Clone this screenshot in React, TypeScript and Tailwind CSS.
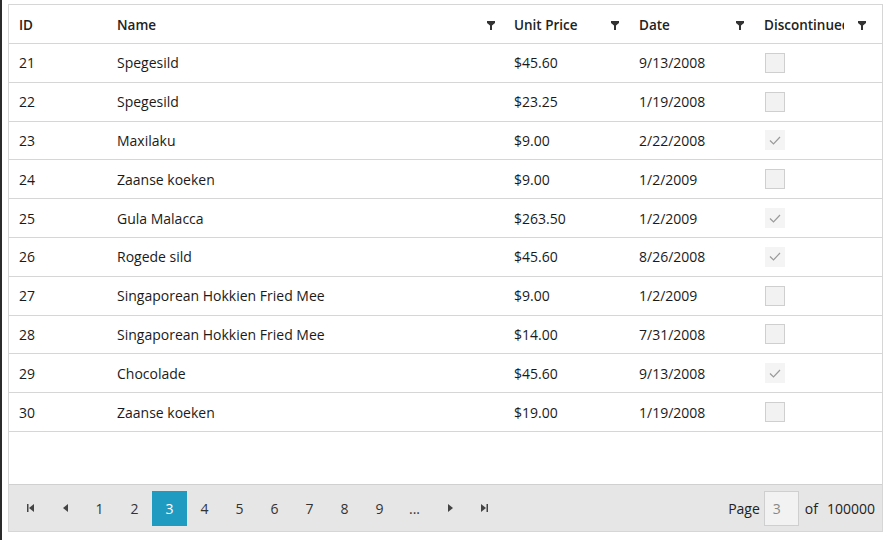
import React from 'react';

const rows = [
  { id: 21, name: 'Spegesild', price: '$45.60', date: '9/13/2008', disc: false },
  { id: 22, name: 'Spegesild', price: '$23.25', date: '1/19/2008', disc: false },
  { id: 23, name: 'Maxilaku', price: '$9.00', date: '2/22/2008', disc: true },
  { id: 24, name: 'Zaanse koeken', price: '$9.00', date: '1/2/2009', disc: false },
  { id: 25, name: 'Gula Malacca', price: '$263.50', date: '1/2/2009', disc: true },
  { id: 26, name: 'Rogede sild', price: '$45.60', date: '8/26/2008', disc: true },
  { id: 27, name: 'Singaporean Hokkien Fried Mee', price: '$9.00', date: '1/2/2009', disc: false },
  { id: 28, name: 'Singaporean Hokkien Fried Mee', price: '$14.00', date: '7/31/2008', disc: false },
  { id: 29, name: 'Chocolade', price: '$45.60', date: '9/13/2008', disc: true },
  { id: 30, name: 'Zaanse koeken', price: '$19.00', date: '1/19/2008', disc: false },
];

function Funnel() {
  return (
    <svg width="8" height="9" viewBox="0 0 8 9" className="shrink-0">
      <path d="M0 0h8v2L5 4.5V9H3V4.5L0 2z" fill="#333" />
    </svg>
  );
}

function Check({ on }: { on: boolean }) {
  if (on) {
    return (
      <div className="w-[20px] h-[20px] bg-[#f4f4f4] flex items-center justify-center">
        <svg width="12" height="9" viewBox="0 0 12 9">
          <path d="M1 4.5l3.5 3.5L11 1" stroke="#9a9a9a" strokeWidth="1.2" fill="none" />
        </svg>
      </div>
    );
  }
  return <div className="w-[20px] h-[20px] bg-[#f2f2f2] border border-[#cfcfcf]" />;
}

function PagerIcon({ kind }: { kind: 'first' | 'prev' | 'next' | 'last' }) {
  const d = {
    first: 'M1 0h1.5v8H1zM8 0v8L3 4z',
    prev: 'M7 0v8L2 4z',
    next: 'M2 0v8l5-4z',
    last: 'M0 0v8l5-4zM5.5 0H7v8H5.5z',
  }[kind];
  return (
    <svg width="8" height="8" viewBox="0 0 8 8">
      <path d={d} fill="#444" />
    </svg>
  );
}

const cols = 'grid grid-cols-[98px_397px_125px_125px_1fr]';

export default function App() {
  return (
    <div className="w-[894px] h-[540px] bg-white flex text-[14px] text-[#1a1a1a]" style={{ fontFamily: '"Open Sans", "Noto Sans", sans-serif' }}>
      <div className="w-[2px] bg-[#2b2b2b] shrink-0" />
      <div className="ml-[6px] mt-[4px] w-[875px] h-[528px] border border-[#d6d6d6] flex flex-col">
        <div className={`${cols} h-[39px] pt-[3px] border-b border-[#d6d6d6] font-semibold text-[13.5px] text-[#222]`}>
          <div className="flex items-center pl-[10px]">ID</div>
          <div className="flex items-center pl-[10px] pr-[9px] justify-between">
            <span>Name</span>
            <Funnel />
          </div>
          <div className="flex items-center pl-[10px] pr-[10px] justify-between">
            <span>Unit Price</span>
            <Funnel />
          </div>
          <div className="flex items-center pl-[10px] pr-[10px] justify-between">
            <span>Date</span>
            <Funnel />
          </div>
          <div className="flex items-center pl-[10px] pr-[14px] gap-[14px]">
            <span className="overflow-hidden whitespace-nowrap w-[80px]">Discontinued</span>
            <Funnel />
          </div>
        </div>
        {rows.map((r) => (
          <div key={r.id} className={`${cols} h-[38.8px] border-b border-[#d6d6d6]`}>
            <div className="flex items-center pl-[10px]">{r.id}</div>
            <div className="flex items-center pl-[10px]">{r.name}</div>
            <div className="flex items-center pl-[10px]">{r.price}</div>
            <div className="flex items-center pl-[10px]">{r.date}</div>
            <div className="flex items-center pl-[11px]">
              <Check on={r.disc} />
            </div>
          </div>
        ))}
        <div className="flex-1" />
        <div className="h-[47px] bg-[#e6e6e6] border-t border-[#d0d0d0] flex items-center pl-[3px] pr-[7px]">
          <div className="flex items-center">
            {(['first', 'prev'] as const).map((k) => (
              <div key={k} className="w-[35px] h-[35px] flex items-center justify-center">
                <PagerIcon kind={k} />
              </div>
            ))}
            {['1', '2', '3', '4', '5', '6', '7', '8', '9', '...'].map((p) => (
              <div
                key={p}
                className={`w-[35px] h-[35px] flex items-center justify-center ${p === '3' ? 'bg-[#1f9bc2] text-white' : 'text-[#333]'}`}
              >
                {p}
              </div>
            ))}
            {(['next', 'last'] as const).map((k) => (
              <div key={k} className="w-[35px] h-[35px] flex items-center justify-center">
                <PagerIcon kind={k} />
              </div>
            ))}
          </div>
          <div className="ml-auto flex items-center text-[#222]">
            <span>Page</span>
            <div className="ml-[4px] w-[35px] h-[35px] bg-[#f2f2f2] border border-[#cfcfcf] flex items-center pl-[8px] text-[#888]">3</div>
            <span className="ml-[6px]">of</span>
            <span className="ml-[9px]">100000</span>
          </div>
        </div>
      </div>
    </div>
  );
}
